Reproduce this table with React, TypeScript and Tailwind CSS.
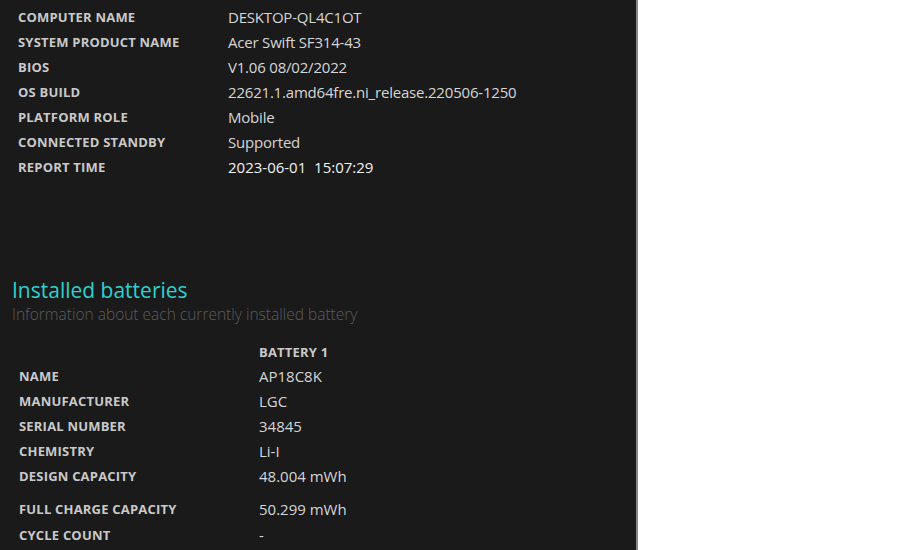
import React from "react";

const top: [string, string][] = [
  ["COMPUTER NAME", "DESKTOP-QL4C1OT"],
  ["SYSTEM PRODUCT NAME", "Acer Swift SF314-43"],
  ["BIOS", "V1.06 08/02/2022"],
  ["OS BUILD", "22621.1.amd64fre.ni_release.220506-1250"],
  ["PLATFORM ROLE", "Mobile"],
  ["CONNECTED STANDBY", "Supported"],
];

const bat: [string, string, string][] = [
  ["NAME", "AP18C8K", "h-[25px]"],
  ["MANUFACTURER", "LGC", "h-[25px]"],
  ["SERIAL NUMBER", "34845", "h-[25px]"],
  ["CHEMISTRY", "Li-I", "h-[25px]"],
  ["DESIGN CAPACITY", "48.004 mWh", "h-[33px]"],
  ["FULL CHARGE CAPACITY", "50.299 mWh", "h-[26px]"],
  ["CYCLE COUNT", "-", "h-[25px]"],
];

export default function App() {
  return (
    <div
      className="w-[920px] h-[550px] bg-white flex overflow-hidden"
      style={{ fontFamily: '"Open Sans", "Noto Sans", sans-serif' }}
    >
      <div className="w-[638px] shrink-0 h-full bg-[#1a1a1a] border-r-2 border-[#8a8a8a] flex flex-col">
        <div className="pt-[5px] flex flex-col">
          {top.map(([k, v]) => (
            <div key={k} className="flex h-[25px] items-center">
              <div className="w-[228px] pl-[18px] text-[13px] tracking-[0.2px] font-bold text-[#c9c9c9]">{k}</div>
              <div className="text-[15px] tracking-[-0.2px] text-[#d6d6d6]">{v}</div>
            </div>
          ))}
          <div className="flex h-[25px] items-center">
            <div className="w-[228px] pl-[18px] text-[13px] tracking-[0.2px] font-bold text-[#c9c9c9]">REPORT TIME</div>
            <div className="text-[15px] text-[#f2f2f2] whitespace-pre">2023-06-01  15:07:29</div>
          </div>
        </div>
        <div className="mt-[97px] pl-[12px]">
          <div className="text-[21px] leading-[27px] text-[#2fd0cf]">Installed batteries</div>
          <div className="text-[15.5px] leading-[21px] font-light text-[#5c5c5c]">
            Information about each currently installed battery
          </div>
        </div>
        <div className="mt-[17px] flex flex-col">
          <div className="flex h-[22px] items-center">
            <div className="w-[259px]" />
            <div className="text-[13px] tracking-[0.2px] font-bold text-[#c9c9c9]">BATTERY 1</div>
          </div>
          {bat.map(([k, v, h]) => (
            <div key={k} className={`flex items-start ${h}`}>
              <div className="w-[259px] pl-[19px] text-[13px] tracking-[0.2px] leading-[25px] font-bold text-[#c9c9c9]">{k}</div>
              <div className="text-[15px] leading-[25px] text-[#d6d6d6]">{v}</div>
            </div>
          ))}
        </div>
      </div>
      <div className="flex-1 bg-white" />
    </div>
  );
}
